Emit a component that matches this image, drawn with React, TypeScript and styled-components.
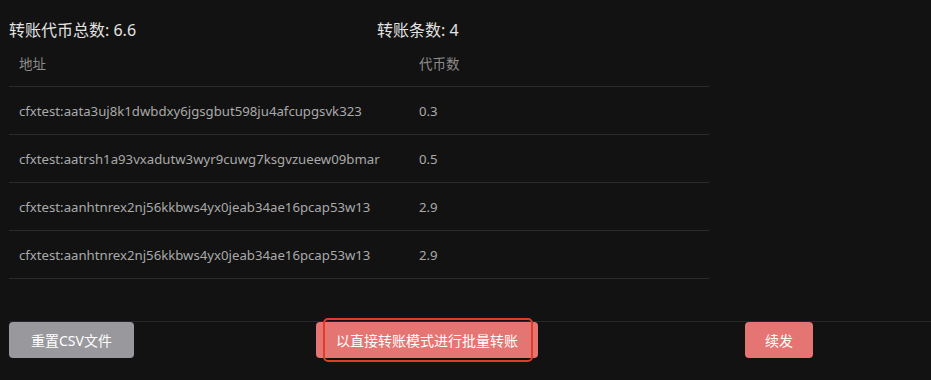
import React from "react";
import styled, { createGlobalStyle } from "styled-components";

const GlobalStyle = createGlobalStyle`
  html, body {
    margin: 0;
    padding: 0;
    background: #121212;
  }
  body {
    font-family: "Noto Sans", "Noto Sans CJK SC", sans-serif;
  }
`;

const Page = styled.div`
  width: 931px;
  height: 380px;
  box-sizing: border-box;
  padding: 17px 0 0 9px;
  background: #121212;
  display: flex;
  flex-direction: column;
  overflow: hidden;
`;

const Summary = styled.div`
  display: grid;
  grid-template-columns: 368px 368px;
  height: 22px;
  align-items: center;
`;

const SummaryItem = styled.div`
  font-size: 16px;
  color: #e3e3e3;
  white-space: nowrap;
`;

const Table = styled.table`
  width: 700px;
  border-collapse: collapse;
  table-layout: fixed;
`;

const HeadCell = styled.th<{ $w?: number }>`
  width: ${(p) => (p.$w ? `${p.$w}px` : "auto")};
  height: 47px;
  padding: 0 10px;
  text-align: left;
  font-weight: 400;
  font-size: 13.5px;
  color: #8c8c8c;
  border-bottom: 1px solid #2b2b2b;
`;

const Cell = styled.td`
  height: 47px;
  padding: 0 10px;
  font-size: 13.2px;
  color: #a9a9a9;
  border-bottom: 1px solid #2b2b2b;
  white-space: nowrap;
`;

const Footer = styled.div`
  margin-top: 42px;
  border-top: 1px solid #26262b;
  display: grid;
  grid-template-columns: 307px 307px 1fr;
  align-items: start;
`;

const Button = styled.button<{ $tone: "gray" | "red" }>`
  height: 36px;
  padding: 0 20px;
  border: none;
  border-radius: 4px;
  font-family: "Noto Sans", "Noto Sans CJK SC", sans-serif;
  font-size: 14px;
  color: #ffffff;
  background: ${(p) => (p.$tone === "gray" ? "#98989d" : "#e57572")};
  cursor: pointer;
  white-space: nowrap;
`;

const GrayButton = styled(Button)`
  padding: 0 22px;
`;

const Highlight = styled.div`
  position: relative;
  justify-self: start;
  &::after {
    content: "";
    position: absolute;
    top: -4px;
    bottom: -4px;
    left: 7px;
    right: 5px;
    border: 2.5px solid #e23c26;
    border-radius: 5px;
    pointer-events: none;
  }
`;

const RightSlot = styled.div`
  padding-left: 122px;
`;

const rows = [
  { address: "cfxtest:aata3uj8k1dwbdxy6jgsgbut598ju4afcupgsvk323", amount: "0.3" },
  { address: "cfxtest:aatrsh1a93vxadutw3wyr9cuwg7ksgvzueew09bmar", amount: "0.5" },
  { address: "cfxtest:aanhtnrex2nj56kkbws4yx0jeab34ae16pcap53w13", amount: "2.9" },
  { address: "cfxtest:aanhtnrex2nj56kkbws4yx0jeab34ae16pcap53w13", amount: "2.9" },
];

export default function App() {
  return (
    <>
      <GlobalStyle />
      <Page>
        <Summary>
          <SummaryItem>转账代币总数: 6.6</SummaryItem>
          <SummaryItem>转账条数: 4</SummaryItem>
        </Summary>
        <Table>
          <thead>
            <tr>
              <HeadCell $w={380}>地址</HeadCell>
              <HeadCell>代币数</HeadCell>
            </tr>
          </thead>
          <tbody>
            {rows.map((r, i) => (
              <tr key={i}>
                <Cell>{r.address}</Cell>
                <Cell>{r.amount}</Cell>
              </tr>
            ))}
          </tbody>
        </Table>
        <Footer>
          <div>
            <GrayButton $tone="gray">重置CSV文件</GrayButton>
          </div>
          <Highlight>
            <Button $tone="red">以直接转账模式进行批量转账</Button>
          </Highlight>
          <RightSlot>
            <Button $tone="red">续发</Button>
          </RightSlot>
        </Footer>
      </Page>
    </>
  );
}
